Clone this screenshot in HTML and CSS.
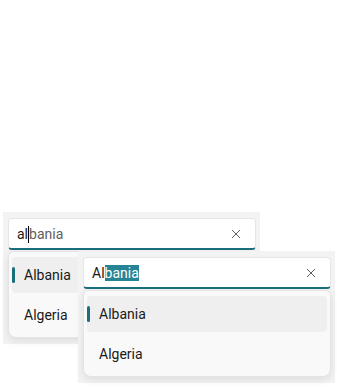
FILE: index.html
```html
<!DOCTYPE html>
<html lang="en">
<head>
<meta charset="utf-8">
<title>AutoSuggest</title>
<link rel="stylesheet" href="styles.css">
</head>
<body>
<div class="stage">
  <div class="combo">
    <div class="field">
      <span class="value"><span class="typed">al</span><span class="caret"></span><span class="hint">bania</span></span>
      <span class="clear"><svg viewBox="0 0 10 10" width="10" height="10"><path d="M1 1L9 9M9 1L1 9" /></svg></span>
    </div>
    <ul class="list">
      <li class="option option--active">Albania</li>
      <li class="option">Algeria</li>
    </ul>
  </div>
  <div class="combo combo--front">
    <div class="field">
      <span class="value"><span class="typed">Al</span><span class="sel">bania</span></span>
      <span class="clear"><svg viewBox="0 0 10 10" width="10" height="10"><path d="M1 1L9 9M9 1L1 9" /></svg></span>
    </div>
    <ul class="list">
      <li class="option option--active">Albania</li>
      <li class="option">Algeria</li>
    </ul>
  </div>
</div>
</body>
</html>
```
FILE: styles.css
```css
html, body {
  margin: 0;
  background: #ffffff;
}
body {
  font-family: Roboto, "Liberation Sans", sans-serif;
  font-size: 14px;
  color: #1a1a1a;
  overflow: hidden;
}
.stage {
  position: relative;
  width: 337px;
  height: 388px;
  padding: 212px 0 0 3px;
  box-sizing: border-box;
}
.combo {
  width: 257px;
  box-sizing: border-box;
  background: #f3f3f3;
  padding: 6px 4px 6px 5px;
}
.combo--front {
  position: absolute;
  left: 78px;
  top: 251px;
}
.field {
  display: flex;
  align-items: center;
  height: 32px;
  box-sizing: border-box;
  background: #ffffff;
  border: 1px solid #e6e6e6;
  border-bottom: 2px solid #1b6f7c;
  border-radius: 4px;
  padding-left: 8px;
}
.value {
  flex: 1;
  line-height: 20px;
  white-space: nowrap;
  padding-top: 1px;
}
.typed {
  color: #1a1a1a;
}
.hint {
  color: #5e5e5e;
}
.caret {
  display: inline-block;
  width: 1px;
  height: 17px;
  background: #000000;
  vertical-align: -4px;
}
.sel {
  background: #268494;
  color: #ffffff;
}
.clear {
  width: 24px;
  height: 24px;
  margin-right: 7px;
  display: flex;
  align-items: center;
  justify-content: center;
}
.clear svg path {
  stroke: #5f5f5f;
  stroke-width: 1;
  fill: none;
}
.list {
  list-style: none;
  margin: 1px 0 0 0;
  padding: 5px 3px 4px 3px;
  display: flex;
  flex-direction: column;
  gap: 4px;
  background: #f9f9f9;
  border: 1px solid #e4e4e4;
  border-radius: 5px 5px 8px 8px;
  box-shadow: 0 3px 8px rgba(0, 0, 0, 0.09);
}
.option {
  position: relative;
  height: 36px;
  display: flex;
  align-items: center;
  padding-left: 12px;
  border-radius: 4px;
  color: #1a1a1a;
}
.option--active {
  background: #efefef;
}
.option--active::before {
  content: "";
  position: absolute;
  left: 0;
  top: 10px;
  width: 3px;
  height: 16px;
  border-radius: 2px;
  background: #1b6f7c;
}
```
